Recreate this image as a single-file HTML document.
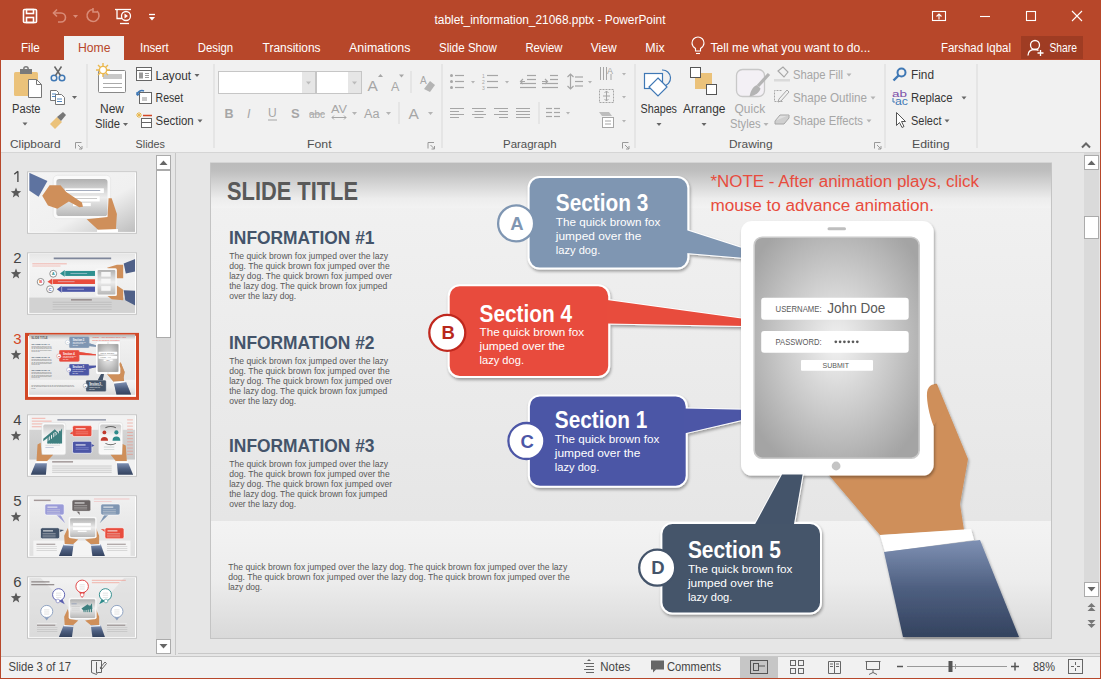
<!DOCTYPE html><html><head><meta charset="utf-8"><style>html,body{margin:0;padding:0;overflow:hidden;background:#E6E6E6}svg{display:block;font-family:"Liberation Sans",sans-serif}</style></head><body>
<svg width="1101" height="679" viewBox="0 0 1101 679">
<defs>
<linearGradient id="gTop" x1="0" y1="0" x2="0" y2="1"><stop offset="0" stop-color="#BBBBBB"/><stop offset="0.18" stop-color="#BFBFBF"/><stop offset="0.8" stop-color="#EDEDED"/><stop offset="1" stop-color="#F2F2F2"/></linearGradient>
<linearGradient id="gMid" x1="0" y1="0" x2="0" y2="1"><stop offset="0" stop-color="#F2F2F2"/><stop offset="1" stop-color="#E2E2E2"/></linearGradient>
<linearGradient id="gBot" x1="0" y1="0" x2="0" y2="1"><stop offset="0" stop-color="#F3F3F3"/><stop offset="0.5" stop-color="#EDEDED"/><stop offset="1" stop-color="#D9D9D9"/></linearGradient>
<radialGradient id="gScr" cx="0.5" cy="0.48" r="0.62"><stop offset="0" stop-color="#F2F2F2"/><stop offset="0.55" stop-color="#C8C8C8"/><stop offset="1" stop-color="#A4A4A4"/></radialGradient>
<linearGradient id="gSleeve" x1="0" y1="0" x2="0" y2="1"><stop offset="0" stop-color="#7F91B4"/><stop offset="0.5" stop-color="#4E5F80"/><stop offset="1" stop-color="#34435F"/></linearGradient>
<filter id="sh" x="-10%" y="-10%" width="130%" height="130%"><feGaussianBlur in="SourceAlpha" stdDeviation="1.5"/><feOffset dx="1" dy="2"/><feComponentTransfer><feFuncA type="linear" slope="0.35"/></feComponentTransfer><feMerge><feMergeNode/><feMergeNode in="SourceGraphic"/></feMerge></filter>
<linearGradient id="t1bg" x1="0" y1="0" x2="1" y2="1"><stop offset="0" stop-color="#F4F4F4"/><stop offset="0.6" stop-color="#F0F0F0"/><stop offset="1" stop-color="#BEBEBE"/></linearGradient>
<linearGradient id="t1scr" x1="0" y1="0" x2="0" y2="1"><stop offset="0" stop-color="#B0B0B0"/><stop offset="0.5" stop-color="#EDEDED"/><stop offset="1" stop-color="#B8B8B8"/></linearGradient>
<linearGradient id="t2bg" x1="0" y1="0" x2="0" y2="1"><stop offset="0" stop-color="#E6E6E6"/><stop offset="0.2" stop-color="#F4F4F4"/><stop offset="1" stop-color="#EAEAEA"/></linearGradient>
<linearGradient id="t4band" x1="0" y1="0" x2="0" y2="1"><stop offset="0" stop-color="#D4D4D4"/><stop offset="1" stop-color="#C8C8C8"/></linearGradient>
<linearGradient id="t4scr" x1="0" y1="0" x2="0" y2="1"><stop offset="0" stop-color="#C8C8C8"/><stop offset="0.4" stop-color="#F4F4F4"/><stop offset="1" stop-color="#F8F8F8"/></linearGradient>
<linearGradient id="t5bg" x1="0" y1="0" x2="0" y2="1"><stop offset="0" stop-color="#F0F0F0"/><stop offset="1" stop-color="#E0E0E0"/></linearGradient>
<linearGradient id="t6bg" x1="0" y1="0" x2="0" y2="1"><stop offset="0" stop-color="#F2F2F2"/><stop offset="1" stop-color="#DCDCDC"/></linearGradient>
<g id="slide">
<rect x="211" y="163" width="840" height="475" fill="url(#gMid)"/>
<rect x="211" y="163" width="840" height="45" fill="url(#gTop)"/>
<rect x="211" y="521" width="840" height="117" fill="url(#gBot)"/>
<text x="227" y="200" font-size="26" font-weight="bold" fill="#595959" textLength="131" lengthAdjust="spacingAndGlyphs">SLIDE TITLE</text>
<text x="229" y="243.8" font-size="18.3" font-weight="bold" fill="#44546A" textLength="145.5" lengthAdjust="spacingAndGlyphs">INFORMATION #1</text>
<text x="229.2" y="259.0" font-size="8.6" fill="#595959" textLength="159" lengthAdjust="spacingAndGlyphs">The quick brown fox jumped over the lazy</text>
<text x="229.2" y="269.03" font-size="8.6" fill="#595959" textLength="160.5" lengthAdjust="spacingAndGlyphs">dog. The quick brown fox jumped over the</text>
<text x="229.2" y="279.06" font-size="8.6" fill="#595959" textLength="163" lengthAdjust="spacingAndGlyphs">lazy dog. The quick brown fox jumped over</text>
<text x="229.2" y="289.09" font-size="8.6" fill="#595959" textLength="158" lengthAdjust="spacingAndGlyphs">the lazy dog. The quick brown fox jumped</text>
<text x="229.2" y="299.12" font-size="8.6" fill="#595959" textLength="67" lengthAdjust="spacingAndGlyphs">over the lazy dog.</text>
<text x="229" y="348.8" font-size="18.3" font-weight="bold" fill="#44546A" textLength="145.5" lengthAdjust="spacingAndGlyphs">INFORMATION #2</text>
<text x="229.2" y="364.0" font-size="8.6" fill="#595959" textLength="159" lengthAdjust="spacingAndGlyphs">The quick brown fox jumped over the lazy</text>
<text x="229.2" y="374.03" font-size="8.6" fill="#595959" textLength="160.5" lengthAdjust="spacingAndGlyphs">dog. The quick brown fox jumped over the</text>
<text x="229.2" y="384.06" font-size="8.6" fill="#595959" textLength="163" lengthAdjust="spacingAndGlyphs">lazy dog. The quick brown fox jumped over</text>
<text x="229.2" y="394.09" font-size="8.6" fill="#595959" textLength="158" lengthAdjust="spacingAndGlyphs">the lazy dog. The quick brown fox jumped</text>
<text x="229.2" y="404.12" font-size="8.6" fill="#595959" textLength="67" lengthAdjust="spacingAndGlyphs">over the lazy dog.</text>
<text x="229" y="451.8" font-size="18.3" font-weight="bold" fill="#44546A" textLength="145.5" lengthAdjust="spacingAndGlyphs">INFORMATION #3</text>
<text x="229.2" y="467.0" font-size="8.6" fill="#595959" textLength="159" lengthAdjust="spacingAndGlyphs">The quick brown fox jumped over the lazy</text>
<text x="229.2" y="477.03" font-size="8.6" fill="#595959" textLength="160.5" lengthAdjust="spacingAndGlyphs">dog. The quick brown fox jumped over the</text>
<text x="229.2" y="487.06" font-size="8.6" fill="#595959" textLength="163" lengthAdjust="spacingAndGlyphs">lazy dog. The quick brown fox jumped over</text>
<text x="229.2" y="497.09" font-size="8.6" fill="#595959" textLength="158" lengthAdjust="spacingAndGlyphs">the lazy dog. The quick brown fox jumped</text>
<text x="229.2" y="507.12" font-size="8.6" fill="#595959" textLength="67" lengthAdjust="spacingAndGlyphs">over the lazy dog.</text>
<text x="228.2" y="570.4" font-size="8.7" fill="#595959" textLength="339" lengthAdjust="spacingAndGlyphs">The quick brown fox jumped over the lazy dog. The quick brown fox jumped over the lazy</text>
<text x="228.2" y="580.4" font-size="8.7" fill="#595959" textLength="341.5" lengthAdjust="spacingAndGlyphs">dog. The quick brown fox jumped over the lazy dog. The quick brown fox jumped over the</text>
<text x="228.2" y="590.4" font-size="8.7" fill="#595959" textLength="34" lengthAdjust="spacingAndGlyphs">lazy dog.</text>
<text x="710.4" y="187.4" font-size="16" fill="#E84C3D" textLength="268.5" lengthAdjust="spacingAndGlyphs">*NOTE - After animation plays, click</text>
<text x="710.4" y="210.5" font-size="16" fill="#E84C3D" textLength="223.5" lengthAdjust="spacingAndGlyphs">mouse to advance animation.</text>
<g filter="url(#sh)">
<path d="M828 474 L930 395 C928 388 932 383 937 384 L968 459 L960 504 L964 530 L880 535 Z" fill="#CF8F5A"/>
<polygon points="880,535 971,529 974,540 885,552" fill="#fff"/>
<polygon points="884,552 980,540 1019,637 903,637" fill="url(#gSleeve)"/>
</g>
<g filter="url(#sh)">
<polygon points="686,230 745,249 745,258 686,253" fill="#7F96B2" stroke="#fff" stroke-width="2" stroke-linejoin="round"/>
<rect x="528.6" y="177.1" width="159.69999999999993" height="91.50000000000003" rx="11" fill="#7F96B2" stroke="#fff" stroke-width="2"/>
</g>
<polygon points="686,230 745,249 745,258 686,253" fill="#7F96B2"/>
<text x="555.8" y="210.6" font-size="23" font-weight="bold" fill="#fff" textLength="92.5" lengthAdjust="spacingAndGlyphs">Section 3</text>
<text x="555.8" y="225.9" font-size="11.3" fill="#fff" textLength="104.5" lengthAdjust="spacingAndGlyphs">The quick brown fox</text>
<text x="555.8" y="239.75" font-size="11.3" fill="#fff" textLength="85.5" lengthAdjust="spacingAndGlyphs">jumped over the</text>
<text x="555.8" y="253.6" font-size="11.3" fill="#fff" textLength="44.5" lengthAdjust="spacingAndGlyphs">lazy dog.</text>
<circle cx="516.1" cy="223.4" r="18" fill="#fff" stroke="#7F96B2" stroke-width="2.3"/>
<text x="516.9" y="229.9" font-size="18.5" font-weight="bold" text-anchor="middle" fill="#7F96B2">A</text>
<g filter="url(#sh)">
<polygon points="607,300 745,319 745,326 607,323.6" fill="#E84C3D" stroke="#fff" stroke-width="2" stroke-linejoin="round"/>
<rect x="448.7" y="285.2" width="160.50000000000006" height="91.80000000000001" rx="11" fill="#E84C3D" stroke="#fff" stroke-width="2"/>
</g>
<polygon points="607,300 745,319 745,326 607,323.6" fill="#E84C3D"/>
<text x="479.5" y="321.7" font-size="23" font-weight="bold" fill="#fff" textLength="92.5" lengthAdjust="spacingAndGlyphs">Section 4</text>
<text x="479.5" y="336.0" font-size="11.3" fill="#fff" textLength="104.5" lengthAdjust="spacingAndGlyphs">The quick brown fox</text>
<text x="479.5" y="349.85" font-size="11.3" fill="#fff" textLength="85.5" lengthAdjust="spacingAndGlyphs">jumped over the</text>
<text x="479.5" y="363.7" font-size="11.3" fill="#fff" textLength="44.5" lengthAdjust="spacingAndGlyphs">lazy dog.</text>
<circle cx="447.3" cy="332.8" r="18" fill="#fff" stroke="#C0281E" stroke-width="2.3"/>
<text x="448.1" y="339.3" font-size="18.5" font-weight="bold" text-anchor="middle" fill="#B8281C">B</text>
<g filter="url(#sh)">
<polygon points="684,408.6 745,409.8 745,419.2 684,433.4" fill="#4C56A6" stroke="#fff" stroke-width="2" stroke-linejoin="round"/>
<rect x="528.9" y="395.4" width="157.80000000000007" height="91.30000000000001" rx="11" fill="#4C56A6" stroke="#fff" stroke-width="2"/>
</g>
<polygon points="684,408.6 745,409.8 745,419.2 684,433.4" fill="#4C56A6"/>
<text x="554.8" y="427.5" font-size="23" font-weight="bold" fill="#fff" textLength="92.5" lengthAdjust="spacingAndGlyphs">Section 1</text>
<text x="554.8" y="442.9" font-size="11.3" fill="#fff" textLength="104.5" lengthAdjust="spacingAndGlyphs">The quick brown fox</text>
<text x="554.8" y="456.75" font-size="11.3" fill="#fff" textLength="85.5" lengthAdjust="spacingAndGlyphs">jumped over the</text>
<text x="554.8" y="470.59999999999997" font-size="11.3" fill="#fff" textLength="44.5" lengthAdjust="spacingAndGlyphs">lazy dog.</text>
<circle cx="526.4" cy="441" r="18" fill="#fff" stroke="#4C56A6" stroke-width="2.3"/>
<text x="527.1999999999999" y="447.5" font-size="18.5" font-weight="bold" text-anchor="middle" fill="#4C56A6">C</text>
<g filter="url(#sh)"><rect x="741" y="221" width="192.7" height="254.6" rx="11" fill="#fff"/></g>
<rect x="754.2" y="237.2" width="165" height="221" rx="8" fill="url(#gScr)" stroke="#CACACA" stroke-width="1.6"/>
<rect x="827.5" y="227.2" width="18.5" height="3" rx="1.5" fill="#BEBEBE"/>
<circle cx="836.1" cy="466" r="4.4" fill="#C4C4C4"/>
<path d="M933.5 426 C929 414 926.5 401 927 393 C927.5 387 931 384 935.5 384.2 L946 408 Z" fill="#CF8F5A"/>
<rect x="761.2" y="297.7" width="147.5" height="22" fill="#fff" rx="3"/>
<rect x="761.2" y="330.9" width="147.5" height="21.8" fill="#fff" rx="3"/>
<rect x="801" y="360.1" width="72" height="10.6" fill="#fff" rx="1"/>
<text x="775.6" y="312.2" font-size="9" fill="#595959" textLength="46" lengthAdjust="spacingAndGlyphs">USERNAME:</text>
<text x="827.3" y="313.4" font-size="15.3" fill="#595959" textLength="58" lengthAdjust="spacingAndGlyphs">John Doe</text>
<text x="775.6" y="345" font-size="9" fill="#595959" textLength="46" lengthAdjust="spacingAndGlyphs">PASSWORD:</text>
<circle cx="835.8" cy="341.8" r="1.35" fill="#595959"/><circle cx="840.0999999999999" cy="341.8" r="1.35" fill="#595959"/><circle cx="844.4" cy="341.8" r="1.35" fill="#595959"/><circle cx="848.6999999999999" cy="341.8" r="1.35" fill="#595959"/><circle cx="853.0" cy="341.8" r="1.35" fill="#595959"/><circle cx="857.3" cy="341.8" r="1.35" fill="#595959"/>
<text x="822.5" y="367.6" font-size="7.2" fill="#595959" textLength="26.5" lengthAdjust="spacingAndGlyphs">SUBMIT</text>
<g filter="url(#sh)">
<polygon points="755.2,524 782,474.6 802.6,474.6 794,524" fill="#44546A" stroke="#fff" stroke-width="2" stroke-linejoin="round"/>
<rect x="661.4" y="523" width="159.60000000000002" height="90.39999999999998" rx="11" fill="#44546A" stroke="#fff" stroke-width="2"/>
</g>
<polygon points="755.2,524 782,474.6 802.6,474.6 794,524" fill="#44546A"/>
<text x="687.9" y="557.7" font-size="23" font-weight="bold" fill="#fff" textLength="93" lengthAdjust="spacingAndGlyphs">Section 5</text>
<text x="687.9" y="573.0" font-size="11.3" fill="#fff" textLength="104.5" lengthAdjust="spacingAndGlyphs">The quick brown fox</text>
<text x="687.9" y="586.85" font-size="11.3" fill="#fff" textLength="85.5" lengthAdjust="spacingAndGlyphs">jumped over the</text>
<text x="687.9" y="600.7" font-size="11.3" fill="#fff" textLength="44.5" lengthAdjust="spacingAndGlyphs">lazy dog.</text>
<circle cx="657.2" cy="567.7" r="18" fill="#fff" stroke="#44546A" stroke-width="2.3"/>
<text x="658.0" y="574.2" font-size="18.5" font-weight="bold" text-anchor="middle" fill="#44546A">D</text>
</g>
</defs>
<rect x="0" y="0" width="1101" height="679" fill="#E6E6E6"/>
<rect x="0" y="0" width="1101" height="60" fill="#B7472A"/>
<text x="550" y="24" font-size="12.3" text-anchor="middle" fill="#fff" textLength="231" lengthAdjust="spacingAndGlyphs">tablet_information_21068.pptx - PowerPoint</text>
<g fill="none" stroke="#fff" stroke-width="1.6"><rect x="23.5" y="9.5" width="13" height="13" rx="1"/><rect x="26.5" y="9.5" width="7" height="4"/><rect x="26.5" y="17.5" width="7" height="5"/></g>
<g fill="none" stroke="#D98C78" stroke-width="1.6"><path d="M54 13 h7 a4.5 4.5 0 0 1 0 9 h-3"/><path d="M57 9.5 l-3.5 3.5 l3.5 3.5"/><path d="M97 11 a6 6 0 1 1 -4 -1.5"/><path d="M93 8 v4 h4" /></g>
<path d="M73 15 h5 l-2.5 3z" fill="#D98C78"/>
<g fill="none" stroke="#fff" stroke-width="1.3"><path d="M115 9.5 h16"/><path d="M117 9.5 v9 h5"/><circle cx="126" cy="16" r="4.5"/><path d="M120 23.5 h9"/></g><path d="M124.5 13.5 l3.5 2.5 l-3.5 2.5z" fill="#fff"/>
<path d="M149 14.5 h6" stroke="#fff" stroke-width="1.3"/><path d="M149 17 h6 l-3 3.5z" fill="#fff"/>
<g fill="none" stroke="#fff" stroke-width="1.1"><rect x="932.5" y="11.5" width="13" height="9"/><path d="M939 19.5 v-5 M936.5 16.5 l2.5 -2.5 l2.5 2.5"/><path d="M980 16.5 h10"/><rect x="1026.5" y="11.5" width="9" height="9"/><path d="M1072 11 l10 10 M1082 11 l-10 10"/></g>
<rect x="64" y="36" width="60" height="24" fill="#F1F1F1"/>
<text x="21" y="52" font-size="12.5" fill="#fff" textLength="18.8" lengthAdjust="spacingAndGlyphs">File</text>
<text x="140" y="52" font-size="12.5" fill="#fff" textLength="28.8" lengthAdjust="spacingAndGlyphs">Insert</text>
<text x="197.7" y="52" font-size="12.5" fill="#fff" textLength="35.4" lengthAdjust="spacingAndGlyphs">Design</text>
<text x="262.6" y="52" font-size="12.5" fill="#fff" textLength="58.0" lengthAdjust="spacingAndGlyphs">Transitions</text>
<text x="349" y="52" font-size="12.5" fill="#fff" textLength="61.5" lengthAdjust="spacingAndGlyphs">Animations</text>
<text x="439" y="52" font-size="12.5" fill="#fff" textLength="57.8" lengthAdjust="spacingAndGlyphs">Slide Show</text>
<text x="525.4" y="52" font-size="12.5" fill="#fff" textLength="37.0" lengthAdjust="spacingAndGlyphs">Review</text>
<text x="590.8" y="52" font-size="12.5" fill="#fff" textLength="25.8" lengthAdjust="spacingAndGlyphs">View</text>
<text x="645.3" y="52" font-size="12.5" fill="#fff" textLength="19.3" lengthAdjust="spacingAndGlyphs">Mix</text>
<text x="78" y="52" font-size="12.5" fill="#B7472A" textLength="32.5" lengthAdjust="spacingAndGlyphs">Home</text>
<g fill="none" stroke="#fff" stroke-width="1.1"><path d="M695.5 51 v-2.5 c-3 -2 -3.5 -4 -3.5 -5.5 a6 6 0 0 1 12 0 c0 1.5 -0.5 3.5 -3.5 5.5 v2.5z"/><path d="M696 53.5 h4"/></g>
<text x="710.5" y="52" font-size="12.5" fill="#fff" textLength="160" lengthAdjust="spacingAndGlyphs">Tell me what you want to do...</text>
<text x="941" y="52" font-size="12.5" fill="#fff" textLength="70" lengthAdjust="spacingAndGlyphs">Farshad Iqbal</text>
<rect x="1021" y="36" width="62" height="23" fill="#9F3C23"/>
<g fill="none" stroke="#fff" stroke-width="1.3"><circle cx="1035" cy="45" r="4.5"/><path d="M1028 55.5 c0 -4 3 -6 7 -6 c1.5 0 2.5 0.3 3.5 0.8"/><path d="M1040.5 50 v6 M1037.5 53 h6"/></g>
<text x="1049.5" y="52" font-size="12.5" fill="#fff" textLength="27.5" lengthAdjust="spacingAndGlyphs">Share</text>
<rect x="0" y="60" width="1" height="619" fill="#B7472A"/>
<rect x="1100" y="60" width="1" height="619" fill="#B7472A"/>
<rect x="0" y="678" width="1101" height="1" fill="#B7472A"/>
<rect x="1" y="60" width="1099" height="92" fill="#F1F1F1"/>
<rect x="1" y="152" width="1099" height="1" fill="#D5D5D5"/>
<rect x="86.5" y="64" width="1" height="84" fill="#DADADA"/>
<rect x="213.5" y="64" width="1" height="84" fill="#DADADA"/>
<rect x="441.5" y="64" width="1" height="84" fill="#DADADA"/>
<rect x="634.5" y="64" width="1" height="84" fill="#DADADA"/>
<rect x="884.5" y="64" width="1" height="84" fill="#DADADA"/>
<rect x="976.5" y="64" width="1" height="84" fill="#DADADA"/>
<text x="10" y="147.6" font-size="11.7" fill="#505050" textLength="50.6" lengthAdjust="spacingAndGlyphs">Clipboard</text>
<text x="135.6" y="147.6" font-size="11.7" fill="#505050" textLength="29.4" lengthAdjust="spacingAndGlyphs">Slides</text>
<text x="307" y="147.6" font-size="11.7" fill="#505050" textLength="24.6" lengthAdjust="spacingAndGlyphs">Font</text>
<text x="503" y="147.6" font-size="11.7" fill="#505050" textLength="53.6" lengthAdjust="spacingAndGlyphs">Paragraph</text>
<text x="729" y="147.6" font-size="11.7" fill="#505050" textLength="43.6" lengthAdjust="spacingAndGlyphs">Drawing</text>
<text x="912" y="147.6" font-size="11.7" fill="#505050" textLength="37.6" lengthAdjust="spacingAndGlyphs">Editing</text>
<g fill="none" stroke="#999" stroke-width="1"><path d="M75.5 148.5 v-6 h6"/><path d="M78.0 145 l4 4 M82.0 146 v3 h-3"/></g>
<g fill="none" stroke="#999" stroke-width="1"><path d="M428 148.5 v-6 h6"/><path d="M430.5 145 l4 4 M434.5 146 v3 h-3"/></g>
<g fill="none" stroke="#999" stroke-width="1"><path d="M622.5 148.5 v-6 h6"/><path d="M625.0 145 l4 4 M629.0 146 v3 h-3"/></g>
<g fill="none" stroke="#999" stroke-width="1"><path d="M874.5 148.5 v-6 h6"/><path d="M877.0 145 l4 4 M881.0 146 v3 h-3"/></g>
<rect x="14" y="72" width="24" height="24" rx="1.5" fill="#EBC27A"/>
<path d="M20 69 h12 v5 h-12z" fill="#7A7A7A"/><circle cx="26" cy="69" r="2.2" fill="none" stroke="#7A7A7A" stroke-width="1.5"/>
<path d="M28.5 79.5 h8 l5 5 v13 h-13z" fill="#fff" stroke="#777" stroke-width="1"/><path d="M36.5 79.5 v5 h5" fill="none" stroke="#777"/>
<text x="12" y="113" font-size="12.5" fill="#363636" textLength="28.5" lengthAdjust="spacingAndGlyphs">Paste</text>
<path d="M22.5 122.5 h5 l-2.5 3z" fill="#666"/>
<g fill="none" stroke="#3F78B5" stroke-width="1.5"><circle cx="54" cy="78" r="2.8"/><circle cx="62" cy="78" r="2.8"/></g><path d="M55.5 75.5 l6 -9 M60.5 75.5 l-6 -9" stroke="#666" stroke-width="1.5"/>
<g fill="#fff" stroke="#777" stroke-width="1"><path d="M50.5 90.5 h6 l2 2 v8 h-8z"/><path d="M55.5 94.5 h6 l3 3 v7 h-9z"/></g><path d="M52 94 h4 M52 96.5 h4 M57 99 h5 M57 101.5 h5" stroke="#3F78B5" stroke-width="0.9"/>
<path d="M72 96 h5 l-2.5 3z" fill="#666"/>
<path d="M50 124 l7 -7 l5 5 l-7 7 z" fill="#EBC27A"/><path d="M57 117 l6 -5 l3 3 l-5 6z" fill="#777"/>
<rect x="98.5" y="70.5" width="27" height="22" rx="1" fill="#fff" stroke="#888"/><rect x="103" y="74" width="19" height="5" fill="#C8C8C8"/><path d="M103 83.5 h19 M103 87.5 h19" stroke="#AAA"/>
<g stroke="#EBB84E" stroke-width="1.4"><path d="M103 63 v14 M96 70 h14 M98 65 l10 10 M108 65 l-10 10"/></g><circle cx="103" cy="70" r="3.6" fill="#fff" stroke="#EBB84E" stroke-width="1.4"/>
<text x="100" y="113" font-size="12.5" fill="#363636" textLength="24" lengthAdjust="spacingAndGlyphs">New</text>
<text x="95" y="128" font-size="12.5" fill="#363636" textLength="25" lengthAdjust="spacingAndGlyphs">Slide</text>
<path d="M123 123 h5 l-2.5 3z" fill="#666"/>
<rect x="136.5" y="67.5" width="15" height="13" fill="#fff" stroke="#666"/><path d="M137 70.5 h14" stroke="#666"/><rect x="139" y="72.5" width="4" height="6" fill="#999"/><path d="M145 73.5 h4 M145 75.5 h4 M145 77.5 h4" stroke="#999"/>
<text x="155.6" y="79.5" font-size="12.5" fill="#363636" textLength="35.5" lengthAdjust="spacingAndGlyphs">Layout</text>
<path d="M194.5 74 h5 l-2.5 3z" fill="#666"/>
<rect x="139.5" y="92.5" width="12" height="11" fill="#fff" stroke="#666"/><rect x="142" y="97" width="5" height="4" fill="#C8C8C8"/><path d="M137 95 a5 5 0 0 1 7 -4" fill="none" stroke="#3F78B5" stroke-width="1.6"/><path d="M136 92 l1 4 l3.5 -1.5z" fill="#3F78B5"/>
<text x="155.6" y="101.5" font-size="12.5" fill="#363636" textLength="27.5" lengthAdjust="spacingAndGlyphs">Reset</text>
<g stroke="#E8B64A" stroke-width="1"><path d="M139 112 v6 M136 115 h6 M137 113 l4 4 M141 113 l-4 4"/></g><path d="M143 115.5 h9" stroke="#D24726" stroke-width="1.5"/><rect x="141.5" y="118.5" width="10" height="9" fill="#fff" stroke="#666"/><path d="M142 122.5 h9" stroke="#666"/>
<text x="155.6" y="125" font-size="12.5" fill="#363636" textLength="38" lengthAdjust="spacingAndGlyphs">Section</text>
<path d="M197.5 119.5 h5 l-2.5 3z" fill="#666"/>
<rect x="218.5" y="71.5" width="97" height="22" fill="#fff" stroke="#C6C6C6"/><rect x="302" y="72" width="13" height="21" fill="#E6E6E6"/><path d="M306 81.5 h5 l-2.5 3z" fill="#BBB"/>
<rect x="316.5" y="71.5" width="45" height="22" fill="#fff" stroke="#C6C6C6"/><rect x="348" y="72" width="13" height="21" fill="#E6E6E6"/><path d="M352 81.5 h5 l-2.5 3z" fill="#BBB"/>
<text x="367.5" y="91" font-size="15.5" fill="#A6A6A6">A</text>
<path d="M378 77 h5 l-2.5 -3z" fill="#A6A6A6"/>
<text x="391" y="91" font-size="12.5" fill="#A6A6A6">A</text>
<path d="M399 74.5 h5 l-2.5 3z" fill="#A6A6A6"/>
<rect x="410.5" y="71" width="1" height="22" fill="#DADADA"/>
<text x="420" y="84" font-size="10" fill="#A6A6A6">A</text>
<path d="M424 89 l6 -8 l5 4 l-5 7z" fill="#B4B4B4"/>
<text x="224.5" y="118" font-size="12.5" font-weight="bold" fill="#A6A6A6">B</text>
<text x="247" y="118" font-size="12.5" fill="#A6A6A6" font-style="italic">I</text>
<text x="268" y="117" font-size="12" fill="#A6A6A6">U</text>
<rect x="268" y="119.5" width="9" height="1" fill="#A6A6A6"/>
<text x="291" y="118" font-size="13" font-weight="bold" fill="#A6A6A6">S</text>
<text x="309" y="117.5" font-size="10.5" fill="#A6A6A6" textLength="16" lengthAdjust="spacingAndGlyphs">abc</text>
<rect x="309" y="113.5" width="16" height="1" fill="#A6A6A6"/>
<text x="331" y="113" font-size="10" fill="#A6A6A6" textLength="16" lengthAdjust="spacingAndGlyphs">AV</text>
<path d="M332 117.5 h14 M334 115.5 l-2 2 l2 2 M344 115.5 l2 2 l-2 2" stroke="#A6A6A6" fill="none"/>
<path d="M352 112 h5 l-2.5 3z" fill="#B4B4B4"/>
<text x="364" y="118" font-size="12.5" fill="#A6A6A6" textLength="15.5" lengthAdjust="spacingAndGlyphs">Aa</text>
<path d="M386 112 h5 l-2.5 3z" fill="#B4B4B4"/>
<rect x="398.5" y="102" width="1" height="22" fill="#DADADA"/>
<text x="408.5" y="118.5" font-size="15.5" fill="#A6A6A6">A</text>
<path d="M428 112 h5 l-2.5 3z" fill="#B4B4B4"/>
<circle cx="451.5" cy="75.5" r="1.5" fill="#A6A6A6"/><circle cx="451.5" cy="81.5" r="1.5" fill="#A6A6A6"/><circle cx="451.5" cy="87.5" r="1.5" fill="#A6A6A6"/>
<path d="M455 75.5 h9" stroke="#A6A6A6" stroke-width="1.2"/><path d="M455 81.5 h9" stroke="#A6A6A6" stroke-width="1.2"/><path d="M455 87.5 h9" stroke="#A6A6A6" stroke-width="1.2"/>
<path d="M471 81 h4 l-2 2.5z" fill="#B4B4B4"/>
<text x="482" y="78" font-size="5" fill="#A6A6A6">1</text><text x="482" y="84" font-size="5" fill="#A6A6A6">2</text><text x="482" y="90" font-size="5" fill="#A6A6A6">3</text>
<path d="M487 75.5 h11" stroke="#A6A6A6" stroke-width="1.2"/><path d="M487 81.5 h11" stroke="#A6A6A6" stroke-width="1.2"/><path d="M487 87.5 h11" stroke="#A6A6A6" stroke-width="1.2"/>
<path d="M505 81 h4 l-2 2.5z" fill="#B4B4B4"/>
<path d="M527 75.5 h9" stroke="#A6A6A6" stroke-width="1.2"/><path d="M527 79.5 h9" stroke="#A6A6A6" stroke-width="1.2"/>
<path d="M520 83.5 h16" stroke="#A6A6A6" stroke-width="1.2"/><path d="M520 87.5 h16" stroke="#A6A6A6" stroke-width="1.2"/>
<path d="M525 81.5 h-4 M523 79 l-2.5 2.5 l2.5 2.5" stroke="#A6A6A6" stroke-width="1.2" fill="none"/>
<path d="M550 75.5 h8" stroke="#A6A6A6" stroke-width="1.2"/><path d="M550 79.5 h8" stroke="#A6A6A6" stroke-width="1.2"/>
<path d="M542 83.5 h16" stroke="#A6A6A6" stroke-width="1.2"/><path d="M542 87.5 h16" stroke="#A6A6A6" stroke-width="1.2"/>
<path d="M542 81.5 h5 M545 79 l2.5 2.5 l-2.5 2.5" stroke="#A6A6A6" stroke-width="1.2" fill="none"/>
<path d="M570.5 74 v15 M567.5 77 l3 -3 l3 3 M567.5 86 l3 3 l3 -3" stroke="#A6A6A6" stroke-width="1.2" fill="none"/>
<path d="M575 77 h8" stroke="#A6A6A6" stroke-width="1.2"/><path d="M575 81.5 h8" stroke="#A6A6A6" stroke-width="1.2"/><path d="M575 86 h8" stroke="#A6A6A6" stroke-width="1.2"/>
<path d="M588 81 h4 l-2 2.5z" fill="#B4B4B4"/>
<path d="M600.5 67 v13 M603.5 67 v13 M606.5 67 v13 M611 74 v6" stroke="#A6A6A6" stroke-width="1"/>
<text x="607" y="74" font-size="9" fill="#A6A6A6">A</text>
<path d="M622 73 h4 l-2 2.5z" fill="#B4B4B4"/>
<rect x="599.5" y="89.5" width="14" height="13" fill="none" stroke="#A6A6A6" stroke-dasharray="2 1"/><path d="M603 96 h7 M606.5 91 v10 M604.5 93 l2 -2 l2 2 M604.5 99 l2 2 l2 -2" stroke="#A6A6A6" fill="none"/>
<path d="M622 96 h4 l-2 2.5z" fill="#B4B4B4"/>
<path d="M599 112 h10 l3 4 h-10z" fill="#BDBDBD"/><rect x="602.5" y="117.5" width="11" height="10" fill="#fff" stroke="#A6A6A6"/><path d="M605 121 h6 M605 124 h6" stroke="#A6A6A6"/>
<path d="M622 120 h4 l-2 2.5z" fill="#B4B4B4"/>
<g stroke="#A6A6A6" stroke-width="1.2"><path d="M450 108.5 h14 M450 111.5 h9 M450 114.5 h14 M450 117.5 h9"/><path d="M472 108.5 h14 M474.5 111.5 h9 M472 114.5 h14 M474.5 117.5 h9"/><path d="M494 108.5 h14 M499 111.5 h9 M494 114.5 h14 M499 117.5 h9"/><path d="M516 108.5 h14 M516 111.5 h14 M516 114.5 h14 M516 117.5 h14"/></g>
<rect x="538.5" y="102" width="1" height="22" fill="#DADADA"/>
<path d="M546 108.5 h6" stroke="#A6A6A6" stroke-width="1.2"/><path d="M546 112.5 h6" stroke="#A6A6A6" stroke-width="1.2"/><path d="M546 116.5 h6" stroke="#A6A6A6" stroke-width="1.2"/>
<path d="M554 108.5 h6" stroke="#A6A6A6" stroke-width="1.2"/><path d="M554 112.5 h6" stroke="#A6A6A6" stroke-width="1.2"/><path d="M554 116.5 h6" stroke="#A6A6A6" stroke-width="1.2"/>
<path d="M566 112 h4 l-2 2.5z" fill="#B4B4B4"/>
<rect x="644.5" y="73.5" width="18" height="15" fill="#fff" stroke="#3F78B5" stroke-width="1.2"/><path d="M662 70 a8 8 0 1 1 1 16" fill="none" stroke="#3F78B5" stroke-width="1.2"/>
<path d="M658 78 l9 9 l-9 9 l-9 -9z" fill="#fff" stroke="#3F78B5" stroke-width="1.2"/>
<text x="640.5" y="113" font-size="12.5" fill="#363636" textLength="36.5" lengthAdjust="spacingAndGlyphs">Shapes</text>
<path d="M656.5 123 h5 l-2.5 3z" fill="#666"/>
<rect x="695" y="73" width="17" height="16" fill="#EBC27A"/><rect x="690.5" y="67.5" width="10" height="10" fill="#fff" stroke="#555"/><rect x="706.5" y="84.5" width="10" height="10" fill="#fff" stroke="#555"/>
<text x="683" y="113" font-size="12.5" fill="#363636" textLength="42.5" lengthAdjust="spacingAndGlyphs">Arrange</text>
<path d="M701.5 123 h5 l-2.5 3z" fill="#666"/>
<rect x="736.5" y="69.5" width="28" height="27" rx="6" fill="#F3F0F5" stroke="#C8C8C8" stroke-width="1.3"/><path d="M769 74 l-11 12" stroke="#B4B4B4" stroke-width="3.2"/><path d="M757 85 l3.5 3.5 c-1 4 -5 7 -11 8 c1 -5 3 -10 7.5 -11.5z" fill="#B4B4B4"/>
<text x="734.6" y="113" font-size="12.5" fill="#A6A6A6" textLength="30.5" lengthAdjust="spacingAndGlyphs">Quick</text>
<text x="730" y="128" font-size="12.5" fill="#A6A6A6" textLength="30.5" lengthAdjust="spacingAndGlyphs">Styles</text>
<path d="M763.5 123 h5 l-2.5 3z" fill="#B4B4B4"/>
<path d="M778 71 l5 -4 l5 5 l-4 5 z" fill="none" stroke="#A6A6A6" stroke-width="1.1"/><rect x="774" y="79" width="16" height="2.5" fill="#DADADA"/>
<text x="793" y="79" font-size="12.5" fill="#A6A6A6" textLength="50" lengthAdjust="spacingAndGlyphs">Shape Fill</text>
<path d="M846.5 73.5 h5 l-2.5 3z" fill="#B4B4B4"/>
<path d="M782.5 101.5 h-8 v-11 h8" fill="none" stroke="#A6A6A6" stroke-dasharray="2 1"/><path d="M779 99 l8 -9 l2 2 l-8 9 l-3 1z" fill="none" stroke="#A6A6A6"/>
<text x="793" y="102" font-size="12.5" fill="#A6A6A6" textLength="74" lengthAdjust="spacingAndGlyphs">Shape Outline</text>
<path d="M870.5 96.5 h5 l-2.5 3z" fill="#B4B4B4"/>
<path d="M775 121 l5 -6 h9 l-5 6z" fill="#E0E0E0" stroke="#A6A6A6"/><path d="M775 121 v3 h9 l5 -6 v-3" fill="#CFCFCF" stroke="#A6A6A6"/>
<text x="793" y="125" font-size="12.5" fill="#A6A6A6" textLength="70" lengthAdjust="spacingAndGlyphs">Shape Effects</text>
<path d="M866.5 119.5 h5 l-2.5 3z" fill="#B4B4B4"/>
<circle cx="901.5" cy="72.5" r="4" fill="none" stroke="#3F78B5" stroke-width="2"/><path d="M898.5 75.5 l-5 5" stroke="#3F78B5" stroke-width="2.4"/>
<text x="911" y="79" font-size="12.5" fill="#363636" textLength="23" lengthAdjust="spacingAndGlyphs">Find</text>
<text x="892" y="97" font-size="9.5" fill="#7B4EA8" textLength="15" lengthAdjust="spacingAndGlyphs">ab</text>
<text x="895" y="105" font-size="10.5" fill="#3F78B5" textLength="13" lengthAdjust="spacingAndGlyphs">ac</text>
<path d="M893 98 v4 h2" stroke="#3F78B5" fill="none" stroke-width="1"/>
<text x="911" y="102" font-size="12.5" fill="#363636" textLength="41.5" lengthAdjust="spacingAndGlyphs">Replace</text>
<path d="M961.5 96.5 h5 l-2.5 3z" fill="#666"/>
<path d="M896.5 112.5 v13 l3 -3 l2.5 5 l2 -1 l-2.5 -5 h4z" fill="#fff" stroke="#555" stroke-width="1"/>
<text x="911" y="125" font-size="12.5" fill="#363636" textLength="30.5" lengthAdjust="spacingAndGlyphs">Select</text>
<path d="M944.5 119.5 h5 l-2.5 3z" fill="#666"/>
<path d="M1082 147.5 l4 -4 l4 4" fill="none" stroke="#666" stroke-width="2"/>
<rect x="1" y="153" width="175" height="502" fill="#E6E6E6"/>
<rect x="175" y="153" width="1" height="502" fill="#C6C6C6"/>
<rect x="156" y="155" width="15" height="499" fill="#DADADA"/>
<rect x="156.5" y="155.5" width="14" height="14" fill="#fff" stroke="#ABABAB"/>
<path d="M159.5 165 h8 l-4 -4.5z" fill="#666"/>
<rect x="156.5" y="170.5" width="14" height="167" fill="#fff" stroke="#ABABAB"/>
<rect x="156.5" y="639.5" width="14" height="14" fill="#fff" stroke="#ABABAB"/>
<path d="M159.5 644 h8 l-4 4.5z" fill="#666"/>
<path d="M17.9 171.2 v10.7 M14.3 174.3 l3.6 -3" stroke="#444" stroke-width="1.3" fill="none"/>
<path d="M16 187.5 l1.4 3.6 l3.8 0.2 l-3 2.4 l1 3.7 l-3.2 -2.1 l-3.2 2.1 l1 -3.7 l-3 -2.4 l3.8 -0.2z" fill="#5A5A5A"/>
<rect x="27" y="171.3" width="110" height="62.5" fill="#C6C6C6"/>
<rect x="28" y="172.3" width="108" height="60.5" fill="#fff"/>
<text x="13.3" y="262.9" font-size="15" fill="#444">2</text>
<path d="M16 268.5 l1.4 3.6 l3.8 0.2 l-3 2.4 l1 3.7 l-3.2 -2.1 l-3.2 2.1 l1 -3.7 l-3 -2.4 l3.8 -0.2z" fill="#5A5A5A"/>
<rect x="27" y="252.3" width="110" height="62.5" fill="#C6C6C6"/>
<rect x="28" y="253.3" width="108" height="60.5" fill="#fff"/>
<text x="13.3" y="343.9" font-size="15" fill="#D24726">3</text>
<path d="M16 349.5 l1.4 3.6 l3.8 0.2 l-3 2.4 l1 3.7 l-3.2 -2.1 l-3.2 2.1 l1 -3.7 l-3 -2.4 l3.8 -0.2z" fill="#5A5A5A"/>
<rect x="25" y="332.90000000000003" width="114" height="67" fill="#D24726"/>
<rect x="28" y="335.90000000000003" width="108" height="61" fill="#fff"/>
<text x="13.3" y="424.9" font-size="15" fill="#444">4</text>
<path d="M16 430.5 l1.4 3.6 l3.8 0.2 l-3 2.4 l1 3.7 l-3.2 -2.1 l-3.2 2.1 l1 -3.7 l-3 -2.4 l3.8 -0.2z" fill="#5A5A5A"/>
<rect x="27" y="414.3" width="110" height="62.5" fill="#C6C6C6"/>
<rect x="28" y="415.3" width="108" height="60.5" fill="#fff"/>
<text x="13.3" y="505.9" font-size="15" fill="#444">5</text>
<path d="M16 511.5 l1.4 3.6 l3.8 0.2 l-3 2.4 l1 3.7 l-3.2 -2.1 l-3.2 2.1 l1 -3.7 l-3 -2.4 l3.8 -0.2z" fill="#5A5A5A"/>
<rect x="27" y="495.3" width="110" height="62.5" fill="#C6C6C6"/>
<rect x="28" y="496.3" width="108" height="60.5" fill="#fff"/>
<text x="13.3" y="586.9" font-size="15" fill="#444">6</text>
<path d="M16 592.5 l1.4 3.6 l3.8 0.2 l-3 2.4 l1 3.7 l-3.2 -2.1 l-3.2 2.1 l1 -3.7 l-3 -2.4 l3.8 -0.2z" fill="#5A5A5A"/>
<rect x="27" y="576.3" width="110" height="62.5" fill="#C6C6C6"/>
<rect x="28" y="577.3" width="108" height="60.5" fill="#fff"/>
<g transform="translate(29 334.7) scale(0.1262) translate(-210 -163)"><use href="#slide"/></g>
<clipPath id="tclip"><rect x="40" y="45" width="1015" height="567"/></clipPath>
<g transform="translate(25 168) scale(0.10445)" clip-path="url(#tclip)">
<rect x="40" y="45" width="1015" height="567" fill="url(#t1bg)"/>
<rect x="270" y="70" width="550" height="415" rx="40" fill="#FAFAFA" stroke="#E0E0E0" stroke-width="6"/>
<rect x="300" y="105" width="490" height="355" rx="30" fill="url(#t1scr)"/>
<rect x="380" y="195" width="375" height="45" fill="#fff"/><rect x="440" y="270" width="275" height="50" fill="#fff"/><rect x="460" y="335" width="170" height="30" fill="#fff"/>
<path d="M390 215 h330" stroke="#8590A8" stroke-width="9.8" opacity="0.75"/>
<path d="M460 292 h230" stroke="#999" stroke-width="7.0" opacity="0.75"/>
<polygon points="40,45 215,125 130,275 40,215" fill="#5E73A0"/>
<polygon points="165,265 235,165 340,165 395,230 545,330 555,370 520,375 420,320 310,390 220,360" fill="#CF8F5A"/>
<polygon points="590,490 790,470 800,290 830,290 880,440 870,590 710,600" fill="#CF8F5A"/>
<polygon points="690,590 890,585 890,612 690,612" fill="#fff"/>
</g>
<g transform="translate(25 249) scale(0.10445)" clip-path="url(#tclip)">
<rect x="40" y="45" width="1015" height="567" fill="url(#t2bg)"/>
<rect x="40" y="465" width="1015" height="147" fill="#D2D2D2"/>
<path d="M275 90 h550" stroke="#5A6580" stroke-width="15.4" opacity="0.75"/>
<path d="M70 142 h330" stroke="#F08070" stroke-width="7.0" opacity="0.75"/>
<path d="M70 163 h270" stroke="#F08070" stroke-width="5.6" opacity="0.75"/>
<rect x="385" y="210" width="285" height="48" fill="#2F9090"/>
<polygon points="380,202 380,266 335,234.0" fill="#2F9090"/>
<circle cx="270" cy="237" r="33" fill="#fff" stroke="#8A8A8A" stroke-width="9"/>
<text x="270" y="251" font-size="40" font-weight="bold" text-anchor="middle" fill="#2F9090">A</text>
<path d="M435 234.0 h160" stroke="#DDE" stroke-width="7.0" opacity="0.75"/>
<rect x="265" y="290" width="405" height="45" fill="#E84C3D"/>
<polygon points="260,282 260,343 215,312.5" fill="#E84C3D"/>
<circle cx="150" cy="315" r="33" fill="#fff" stroke="#8A8A8A" stroke-width="9"/>
<text x="150" y="329" font-size="40" font-weight="bold" text-anchor="middle" fill="#E84C3D">B</text>
<path d="M315 312.5 h160" stroke="#DDE" stroke-width="7.0" opacity="0.75"/>
<rect x="355" y="360" width="315" height="50" fill="#4C56A6"/>
<polygon points="350,352 350,418 305,385.0" fill="#4C56A6"/>
<circle cx="240" cy="385" r="33" fill="#fff" stroke="#8A8A8A" stroke-width="9"/>
<text x="240" y="399" font-size="40" font-weight="bold" text-anchor="middle" fill="#4C56A6">C</text>
<path d="M405 385.0 h160" stroke="#DDE" stroke-width="7.0" opacity="0.75"/>
<polygon points="785,180 880,150 940,150 940,280 880,280" fill="#CF8F5A"/>
<polygon points="790,450 880,350 940,390 940,490 830,480" fill="#CF8F5A"/>
<polygon points="945,140 1055,95 1055,215 965,235" fill="#4F6088"/>
<polygon points="945,395 1055,400 1055,540 960,490" fill="#4F6088"/>
<rect x="675" y="185" width="205" height="265" rx="15" fill="#F8F8F8"/><rect x="695" y="200" width="170" height="235" rx="10" fill="url(#t1scr)"/>
<rect x="730" y="220" width="90" height="45" fill="#F6F6F6"/>
<rect x="730" y="285" width="90" height="45" fill="#F6F6F6"/>
<rect x="730" y="355" width="90" height="45" fill="#F6F6F6"/>
<path d="M440 487 h200" stroke="#6A5A5A" stroke-width="11.2" opacity="0.75"/>
<path d="M265 510 h565" stroke="#A9A9A9" stroke-width="5.6" opacity="0.75"/><path d="M265 532 h565" stroke="#A9A9A9" stroke-width="5.6" opacity="0.75"/><path d="M265 554 h565" stroke="#A9A9A9" stroke-width="5.6" opacity="0.75"/>
<path d="M265 578 h565" stroke="#A9A9A9" stroke-width="5.6" opacity="0.75"/>
</g>
<g transform="translate(25 411) scale(0.10445)" clip-path="url(#tclip)">
<rect x="40" y="45" width="1015" height="567" fill="#F2F2F2"/>
<rect x="40" y="180" width="1015" height="285" fill="url(#t4band)"/>
<path d="M310 85 h465" stroke="#5A6580" stroke-width="14.0" opacity="0.75"/>
<path d="M65 70 h130" stroke="#F08070" stroke-width="7.0" opacity="0.75"/>
<path d="M65 97 h190" stroke="#F08070" stroke-width="7.0" opacity="0.75"/><path d="M65 124 h190" stroke="#F08070" stroke-width="7.0" opacity="0.75"/><path d="M65 151 h190" stroke="#F08070" stroke-width="7.0" opacity="0.75"/>
<path d="M978 85 h55" stroke="#F08070" stroke-width="6.3" opacity="0.75"/>
<path d="M978 115 h55" stroke="#F08070" stroke-width="6.3" opacity="0.75"/>
<path d="M978 145 h55" stroke="#F08070" stroke-width="6.3" opacity="0.75"/>
<path d="M978 175 h55" stroke="#F08070" stroke-width="6.3" opacity="0.75"/>
<path d="M978 205 h55" stroke="#F08070" stroke-width="6.3" opacity="0.75"/>
<path d="M978 235 h55" stroke="#F08070" stroke-width="6.3" opacity="0.75"/>
<path d="M978 265 h55" stroke="#F08070" stroke-width="6.3" opacity="0.75"/>
<path d="M978 295 h55" stroke="#F08070" stroke-width="6.3" opacity="0.75"/>
<path d="M978 325 h55" stroke="#F08070" stroke-width="6.3" opacity="0.75"/>
<path d="M978 355 h55" stroke="#F08070" stroke-width="6.3" opacity="0.75"/>
<path d="M978 385 h55" stroke="#F08070" stroke-width="6.3" opacity="0.75"/>
<path d="M978 415 h55" stroke="#F08070" stroke-width="6.3" opacity="0.75"/>
<rect x="160" y="110" width="230" height="310" rx="25" fill="#FAFAFA" stroke="#DDD" stroke-width="5"/><rect x="175" y="130" width="200" height="270" rx="15" fill="url(#t4scr)"/>
<rect x="705" y="110" width="230" height="310" rx="25" fill="#FAFAFA" stroke="#DDD" stroke-width="5"/><rect x="720" y="130" width="200" height="270" rx="15" fill="url(#t4scr)"/>
<polygon points="175,265 285,175 325,215 355,165 355,310 215,310 215,295 320,215 290,200 175,290" fill="#3F8080"/>
<rect x="215" y="240" width="12" height="70" fill="#3F8080"/>
<rect x="237" y="230" width="12" height="80" fill="#3F8080"/>
<rect x="259" y="220" width="12" height="90" fill="#3F8080"/>
<rect x="281" y="210" width="12" height="100" fill="#3F8080"/>
<rect x="303" y="200" width="12" height="110" fill="#3F8080"/>
<rect x="325" y="190" width="12" height="120" fill="#3F8080"/>
<path d="M195 328 h140" stroke="#BBB" stroke-width="5.6" opacity="0.75"/>
<path d="M195 350 h80" stroke="#7A8AB0" stroke-width="5.6" opacity="0.75"/>
<circle cx="760" cy="205" r="18" fill="#C0392B"/><path d="M725 285 a35 35 0 0 1 70 0z" fill="#C0392B"/>
<circle cx="875" cy="205" r="20" fill="#2E8B8B"/><path d="M838 285 a37 40 0 0 1 74 0z" fill="#2E8B8B"/>
<path d="M770 160 q50 -25 100 0" stroke="#666" stroke-width="10" fill="none"/><path d="M770 310 q50 25 100 0" stroke="#666" stroke-width="10" fill="none"/>
<path d="M755 345 h100" stroke="#9AA" stroke-width="5.6" opacity="0.75"/><path d="M755 367 h100" stroke="#9AA" stroke-width="5.6" opacity="0.75"/>
<rect x="455" y="140" width="185" height="105" rx="15" fill="#E84C3D" stroke="#fff" stroke-width="6"/>
<polygon points="458,195 430,215 458,225" fill="#E84C3D"/>
<rect x="455" y="290" width="185" height="115" rx="15" fill="#4C56A6" stroke="#fff" stroke-width="6"/>
<polygon points="637,315 665,330 637,345" fill="#4C56A6"/>
<path d="M485 170 h95" stroke="#fff" stroke-width="12.6" opacity="0.75"/>
<path d="M485 200 h120" stroke="#F9B0A8" stroke-width="5.6" opacity="0.75"/><path d="M485 218 h120" stroke="#F9B0A8" stroke-width="5.6" opacity="0.75"/>
<path d="M485 325 h95" stroke="#fff" stroke-width="12.6" opacity="0.75"/>
<path d="M485 352 h125" stroke="#A8B0E8" stroke-width="5.6" opacity="0.75"/><path d="M485 370 h125" stroke="#A8B0E8" stroke-width="5.6" opacity="0.75"/>
<polygon points="110,480 120,320 150,305 160,420 270,420 210,480" fill="#CF8F5A"/>
<polygon points="820,420 930,420 935,315 965,330 975,480 870,480" fill="#CF8F5A"/>
<polygon points="100,480 215,480 210,500 100,500" fill="#fff"/>
<polygon points="870,480 985,480 990,500 880,500" fill="#fff"/>
<polygon points="55,610 100,500 210,500 200,610" fill="url(#gSleeve)"/>
<polygon points="880,500 990,500 1035,610 890,610" fill="url(#gSleeve)"/>
<path d="M260 487 h200" stroke="#6A5A5A" stroke-width="11.2" opacity="0.75"/>
<path d="M260 527 h570" stroke="#999" stroke-width="5.6" opacity="0.75"/><path d="M260 547 h570" stroke="#999" stroke-width="5.6" opacity="0.75"/><path d="M260 567 h570" stroke="#999" stroke-width="5.6" opacity="0.75"/><path d="M260 587 h570" stroke="#999" stroke-width="5.6" opacity="0.75"/>
</g>
<g transform="translate(25 492) scale(0.10445)" clip-path="url(#tclip)">
<rect x="40" y="45" width="1015" height="567" fill="url(#t5bg)"/>
<rect x="80" y="465" width="930" height="147" fill="#F4F4F4"/>
<path d="M85 80 h160" stroke="#8A7A7A" stroke-width="14.0" opacity="0.75"/>
<path d="M660 67 h340" stroke="#F0A0A0" stroke-width="7.0" opacity="0.75"/>
<path d="M660 90 h170" stroke="#F0A0A0" stroke-width="5.6" opacity="0.75"/>
<polygon points="300,218 340,218 385,300" fill="#9A9BD8"/>
<rect x="190" y="115" width="185" height="105" rx="18" fill="#9A9BD8" stroke="#fff" stroke-width="6"/>
<path d="M215 145 h95" stroke="#F4F4F4" stroke-width="12.6" opacity="0.75"/>
<path d="M210 170 h125" stroke="#E8E8E8" stroke-width="4.9" opacity="0.75"/><path d="M210 186 h125" stroke="#E8E8E8" stroke-width="4.9" opacity="0.75"/><path d="M210 202 h125" stroke="#E8E8E8" stroke-width="4.9" opacity="0.75"/>
<polygon points="490,183 520,183 525,220" fill="#6A6464"/>
<rect x="450" y="75" width="180" height="110" rx="18" fill="#6A6464" stroke="#fff" stroke-width="6"/>
<path d="M475 105 h95" stroke="#F4F4F4" stroke-width="12.6" opacity="0.75"/>
<path d="M470 130 h125" stroke="#E8E8E8" stroke-width="4.9" opacity="0.75"/><path d="M470 146 h125" stroke="#E8E8E8" stroke-width="4.9" opacity="0.75"/><path d="M470 162 h125" stroke="#E8E8E8" stroke-width="4.9" opacity="0.75"/>
<polygon points="760,218 800,218 715,300" fill="#7F96B2"/>
<rect x="725" y="115" width="185" height="105" rx="18" fill="#7F96B2" stroke="#fff" stroke-width="6"/>
<path d="M750 145 h95" stroke="#F4F4F4" stroke-width="12.6" opacity="0.75"/>
<path d="M745 170 h125" stroke="#E8E8E8" stroke-width="4.9" opacity="0.75"/><path d="M745 186 h125" stroke="#E8E8E8" stroke-width="4.9" opacity="0.75"/><path d="M745 202 h125" stroke="#E8E8E8" stroke-width="4.9" opacity="0.75"/>
<polygon points="330,360 330,385 375,365" fill="#44546A"/>
<rect x="148" y="342" width="184" height="106" rx="18" fill="#44546A" stroke="#fff" stroke-width="6"/>
<path d="M173 372 h95" stroke="#F4F4F4" stroke-width="12.6" opacity="0.75"/>
<path d="M168 397 h125" stroke="#E8E8E8" stroke-width="4.9" opacity="0.75"/><path d="M168 413 h125" stroke="#E8E8E8" stroke-width="4.9" opacity="0.75"/><path d="M168 429 h125" stroke="#E8E8E8" stroke-width="4.9" opacity="0.75"/>
<polygon points="768,360 768,385 725,355" fill="#E84C3D"/>
<rect x="765" y="342" width="183" height="106" rx="18" fill="#E84C3D" stroke="#fff" stroke-width="6"/>
<path d="M790 372 h95" stroke="#F4F4F4" stroke-width="12.6" opacity="0.75"/>
<path d="M785 397 h125" stroke="#E8E8E8" stroke-width="4.9" opacity="0.75"/><path d="M785 413 h125" stroke="#E8E8E8" stroke-width="4.9" opacity="0.75"/><path d="M785 429 h125" stroke="#E8E8E8" stroke-width="4.9" opacity="0.75"/>
<polygon points="375,420 410,345 440,440 510,455 460,500 380,500" fill="#CF8F5A"/>
<polygon points="575,455 660,440 680,345 710,420 710,500 630,500" fill="#CF8F5A"/>
<rect x="418" y="238" width="268" height="205" rx="20" fill="#F8F8F8"/><rect x="432" y="252" width="240" height="178" rx="12" fill="url(#t1scr)"/>
<rect x="460" y="298" width="170" height="25" fill="#fff"/><rect x="460" y="338" width="170" height="25" fill="#fff"/><rect x="505" y="370" width="85" height="12" fill="#fff"/>
<polygon points="370,500 465,500 450,612 325,612" fill="url(#gSleeve)"/>
<polygon points="370,497 465,505 465,515 370,510" fill="#fff"/>
<polygon points="630,500 725,500 765,612 645,612" fill="url(#gSleeve)"/>
<polygon points="625,505 720,497 725,510 625,515" fill="#fff"/>
<path d="M110 500 h180" stroke="#6A5A5A" stroke-width="8.4" opacity="0.75"/>
<path d="M110 520 h195" stroke="#AAA" stroke-width="4.9" opacity="0.75"/><path d="M110 540 h195" stroke="#AAA" stroke-width="4.9" opacity="0.75"/><path d="M110 560 h195" stroke="#AAA" stroke-width="4.9" opacity="0.75"/>
<path d="M785 500 h180" stroke="#6A5A5A" stroke-width="8.4" opacity="0.75"/>
<path d="M785 520 h195" stroke="#AAA" stroke-width="4.9" opacity="0.75"/><path d="M785 540 h195" stroke="#AAA" stroke-width="4.9" opacity="0.75"/><path d="M785 560 h195" stroke="#AAA" stroke-width="4.9" opacity="0.75"/>
</g>
<g transform="translate(25 573) scale(0.10445)" clip-path="url(#tclip)">
<rect x="40" y="45" width="1015" height="567" fill="url(#t6bg)"/>
<polygon points="40,45 150,45 420,330 380,612 40,612" fill="#DADADA" opacity="0.6"/>
<polygon points="1055,45 950,45 700,330 720,612 1055,612" fill="#DADADA" opacity="0.6"/>
<path d="M60 85 h175" stroke="#6A6060" stroke-width="11.2" opacity="0.75"/>
<path d="M60 112 h220" stroke="#6A6060" stroke-width="11.2" opacity="0.75"/>
<path d="M640 70 h325" stroke="#F08070" stroke-width="7.0" opacity="0.75"/>
<path d="M640 93 h265" stroke="#F08070" stroke-width="7.0" opacity="0.75"/>
<polygon points="512,168 582,168 547,245" fill="#E04040"/>
<circle cx="547" cy="128" r="60" fill="#fff" stroke="#E04040" stroke-width="9"/>
<path d="M522 113 h50" stroke="#AAA" stroke-width="4.2" opacity="0.75"/><path d="M522 133 h50" stroke="#AAA" stroke-width="4.2" opacity="0.75"/><path d="M522 153 h50" stroke="#AAA" stroke-width="4.2" opacity="0.75"/>
<polygon points="287,248 357,248 380,300" fill="#5A5FB0"/>
<circle cx="322" cy="208" r="58" fill="#fff" stroke="#5A5FB0" stroke-width="9"/>
<path d="M297 193 h50" stroke="#AAA" stroke-width="4.2" opacity="0.75"/><path d="M297 213 h50" stroke="#AAA" stroke-width="4.2" opacity="0.75"/><path d="M297 233 h50" stroke="#AAA" stroke-width="4.2" opacity="0.75"/>
<polygon points="735,248 805,248 710,300" fill="#2E8B8B"/>
<circle cx="770" cy="208" r="58" fill="#fff" stroke="#2E8B8B" stroke-width="9"/>
<path d="M745 193 h50" stroke="#AAA" stroke-width="4.2" opacity="0.75"/><path d="M745 213 h50" stroke="#AAA" stroke-width="4.2" opacity="0.75"/><path d="M745 233 h50" stroke="#AAA" stroke-width="4.2" opacity="0.75"/>
<polygon points="173,408 243,408 208,455" fill="#8CA0C0"/>
<circle cx="208" cy="368" r="58" fill="#fff" stroke="#8CA0C0" stroke-width="9"/>
<path d="M183 353 h50" stroke="#AAA" stroke-width="4.2" opacity="0.75"/><path d="M183 373 h50" stroke="#AAA" stroke-width="4.2" opacity="0.75"/><path d="M183 393 h50" stroke="#AAA" stroke-width="4.2" opacity="0.75"/>
<polygon points="845,408 915,408 880,455" fill="#8CA0C0"/>
<circle cx="880" cy="368" r="58" fill="#fff" stroke="#8CA0C0" stroke-width="9"/>
<path d="M855 353 h50" stroke="#AAA" stroke-width="4.2" opacity="0.75"/><path d="M855 373 h50" stroke="#AAA" stroke-width="4.2" opacity="0.75"/><path d="M855 393 h50" stroke="#AAA" stroke-width="4.2" opacity="0.75"/>
<circle cx="315" cy="268" r="18" fill="#fff" stroke="#5A5FB0" stroke-width="5"/><circle cx="775" cy="268" r="18" fill="#fff" stroke="#2E8B8B" stroke-width="5"/><circle cx="547" cy="210" r="18" fill="#fff" stroke="#E04040" stroke-width="5"/>
<polygon points="375,420 410,345 440,440 510,455 460,500 380,500" fill="#CF8F5A"/>
<polygon points="575,455 660,440 680,345 710,420 710,500 630,500" fill="#CF8F5A"/>
<rect x="418" y="238" width="268" height="205" rx="20" fill="#F8F8F8"/><rect x="432" y="252" width="240" height="178" rx="12" fill="url(#t1scr)"/>
<polygon points="540,340 600,300 620,320 640,290 645,345 560,360" fill="#3F8080"/>
<rect x="560" y="335" width="10" height="40" fill="#3F8080"/>
<rect x="578" y="327" width="10" height="48" fill="#3F8080"/>
<rect x="596" y="319" width="10" height="56" fill="#3F8080"/>
<rect x="614" y="311" width="10" height="64" fill="#3F8080"/>
<rect x="632" y="303" width="10" height="72" fill="#3F8080"/>
<path d="M445 295 h50" stroke="#8090B0" stroke-width="8.4" opacity="0.75"/>
<path d="M445 322 h80" stroke="#AAA" stroke-width="4.2" opacity="0.75"/><path d="M445 338 h80" stroke="#AAA" stroke-width="4.2" opacity="0.75"/><path d="M445 354 h80" stroke="#AAA" stroke-width="4.2" opacity="0.75"/>
<polygon points="370,500 465,500 450,612 325,612" fill="url(#gSleeve)"/>
<polygon points="370,497 465,505 465,515 370,510" fill="#fff"/>
<polygon points="630,500 725,500 765,612 645,612" fill="url(#gSleeve)"/>
<polygon points="625,505 720,497 725,510 625,515" fill="#fff"/>
<path d="M115 482 h190" stroke="#fff" stroke-width="5.6" opacity="0.75"/>
<path d="M785 482 h190" stroke="#fff" stroke-width="5.6" opacity="0.75"/>
<path d="M115 500 h175" stroke="#6A5A5A" stroke-width="8.4" opacity="0.75"/>
<path d="M115 520 h195" stroke="#AAA" stroke-width="4.9" opacity="0.75"/><path d="M115 540 h195" stroke="#AAA" stroke-width="4.9" opacity="0.75"/><path d="M115 560 h195" stroke="#AAA" stroke-width="4.9" opacity="0.75"/>
<path d="M785 500 h175" stroke="#6A5A5A" stroke-width="8.4" opacity="0.75"/>
<path d="M785 520 h195" stroke="#AAA" stroke-width="4.9" opacity="0.75"/><path d="M785 540 h195" stroke="#AAA" stroke-width="4.9" opacity="0.75"/><path d="M785 560 h195" stroke="#AAA" stroke-width="4.9" opacity="0.75"/>
</g>
<rect x="1084" y="153" width="15" height="502" fill="#DADADA"/>
<rect x="1084.5" y="155.5" width="14" height="14" fill="#fff" stroke="#ABABAB"/>
<path d="M1087.5 165 h8 l-4 -4.5z" fill="#666"/>
<rect x="1084.5" y="216.5" width="14" height="22" fill="#fff" stroke="#ABABAB"/>
<rect x="1084.5" y="582.5" width="14" height="14" fill="#fff" stroke="#ABABAB"/>
<path d="M1087.5 587 h8 l-4 4.5z" fill="#666"/>
<rect x="1084" y="597" width="15" height="58" fill="#E6E6E6"/>
<path d="M1087.5 607 l4 -4 l4 4z M1087.5 611 l4 -4 l4 4z" fill="#777"/>
<path d="M1087.5 620 l4 4 l4 -4z M1087.5 624 l4 4 l4 -4z" fill="#777"/>
<rect x="178" y="653" width="922" height="1" fill="#C8C8C8"/>
<rect x="1" y="656" width="1099" height="1" fill="#C8C8C8"/>
<rect x="1" y="657" width="1099" height="21" fill="#F1F1F1"/>
<text x="8.5" y="671" font-size="12" fill="#444" textLength="62.5" lengthAdjust="spacingAndGlyphs">Slide 3 of 17</text>
<path d="M91.5 660.5 v12 l5 2 l1 -2 h4 v-12 z M96.5 662 v11" fill="none" stroke="#666"/><path d="M100 668 l5 -6 l1.5 1.5 l-5 6z" fill="none" stroke="#666"/>
<path d="M584 663.5 h10 M586 666.5 h8 M584 669.5 h10 M586 672.5 h8" stroke="#666"/><path d="M587 661 l2 -2 l2 2z" fill="#666"/>
<text x="600.3" y="671" font-size="12" fill="#444" textLength="30" lengthAdjust="spacingAndGlyphs">Notes</text>
<path d="M651 660.5 h13 v9 h-8 l-3 3 v-3 h-2z" fill="#666"/>
<text x="667" y="671" font-size="12" fill="#444" textLength="54" lengthAdjust="spacingAndGlyphs">Comments</text>
<rect x="740" y="657" width="38" height="21" fill="#C6C6C6"/>
<rect x="750.5" y="660.5" width="17" height="13" fill="none" stroke="#555"/><rect x="753.5" y="663.5" width="5" height="7" fill="none" stroke="#555"/><path d="M759 666 h6" stroke="#555"/>
<g fill="none" stroke="#666"><rect x="790.5" y="660.5" width="5" height="5"/><rect x="798.5" y="660.5" width="5" height="5"/><rect x="790.5" y="668.5" width="5" height="5"/><rect x="798.5" y="668.5" width="5" height="5"/></g>
<g fill="none" stroke="#666"><path d="M828.5 661.5 h6 v12 h-6z M834.5 661.5 h6 v12 h-6z"/><path d="M830 664 h3 M830 666.5 h3 M836 664 h3 M836 666.5 h3"/></g>
<g fill="none" stroke="#666"><path d="M865.5 661.5 h15 M866.5 661.5 v8 h13 v-8 M873 669.5 v3 M869 674.5 l4 -2 l4 2"/></g>
<path d="M897 666.5 h6" stroke="#555" stroke-width="1.5"/><path d="M907 666.5 h100" stroke="#999"/><rect x="948.5" y="661" width="4" height="11" fill="#555"/><path d="M955.5 664 v5" stroke="#999"/>
<path d="M1011 666.5 h8 M1015 662.5 v8" stroke="#555" stroke-width="1.5"/>
<text x="1033" y="671" font-size="12" fill="#444" textLength="22" lengthAdjust="spacingAndGlyphs">88%</text>
<rect x="1068.5" y="659.5" width="14" height="14" fill="none" stroke="#666"/><path d="M1075.5 662 v3 M1075.5 668 v3 M1071 666.5 h3 M1077 666.5 h3" stroke="#666"/>
<rect x="210" y="162.5" width="842" height="476.5" fill="#C4C4C4"/>
<use href="#slide"/>
</svg></body></html>
